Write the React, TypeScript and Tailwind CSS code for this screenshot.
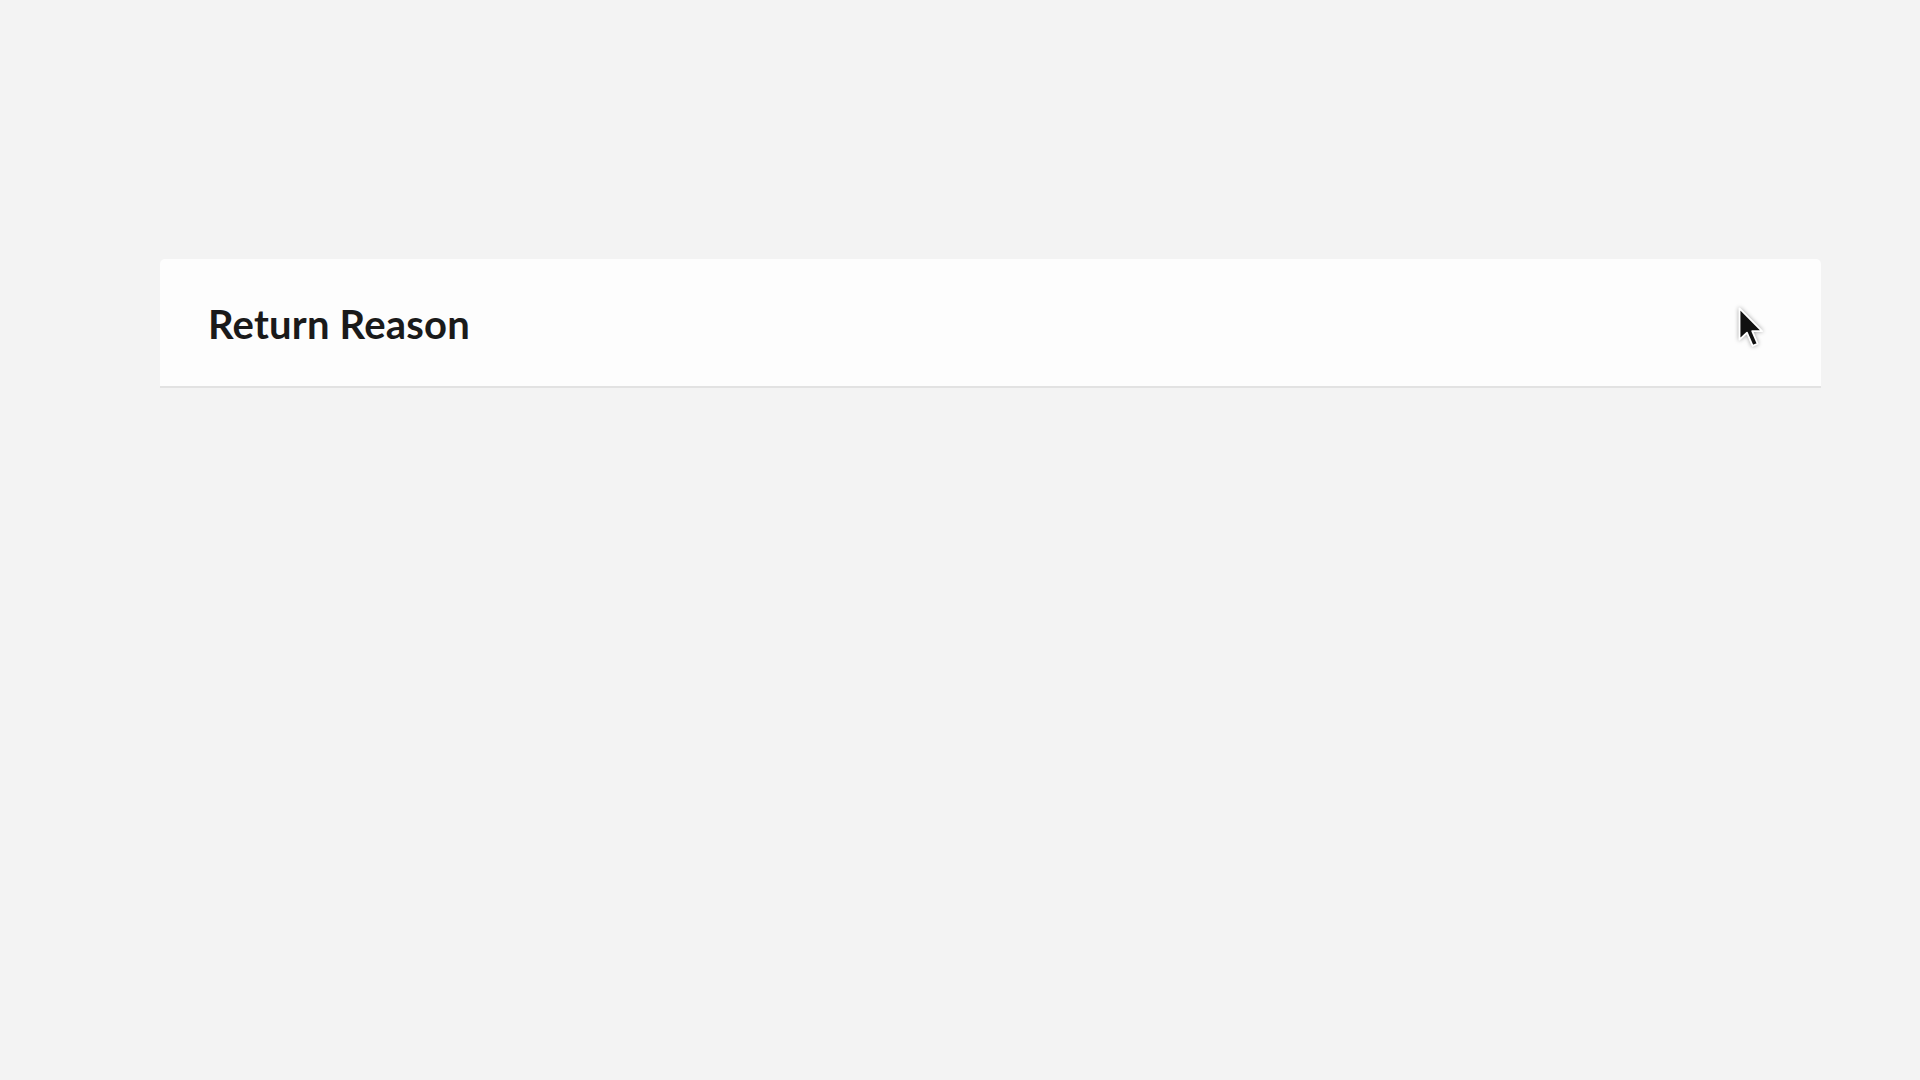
import React from 'react';

const Cursor: React.FC = () => (
  <svg
    className="absolute right-[54px] top-[48px] h-[44px] w-[30px] drop-shadow-[0_0_2px_rgba(0,0,0,0.35)]"
    viewBox="0 0 24 35"
    fill="none"
  >
    <path
      d="M2 1 L2 26 L8 20.5 L12.5 31 L16.5 29.3 L12.2 19.2 L20 19.2 Z"
      fill="#111"
      stroke="#fff"
      strokeWidth="1.5"
      strokeLinejoin="round"
    />
  </svg>
);

export default function App() {
  return (
    <div className="min-h-screen w-full bg-[#f3f3f3] px-[160px] pt-[259px] font-['Lato','Liberation_Sans',sans-serif]">
      <div className="relative flex h-[129px] w-[1661px] items-center rounded-t-[5px] border-b-2 border-[#e2e2e2] bg-[#fdfdfd] px-[48px]">
        <h2 className="mt-[3px] text-[40px] font-bold leading-none tracking-[0.2px] text-[#1a1a1a]">Return Reason</h2>
        <Cursor />
      </div>
    </div>
  );
}
